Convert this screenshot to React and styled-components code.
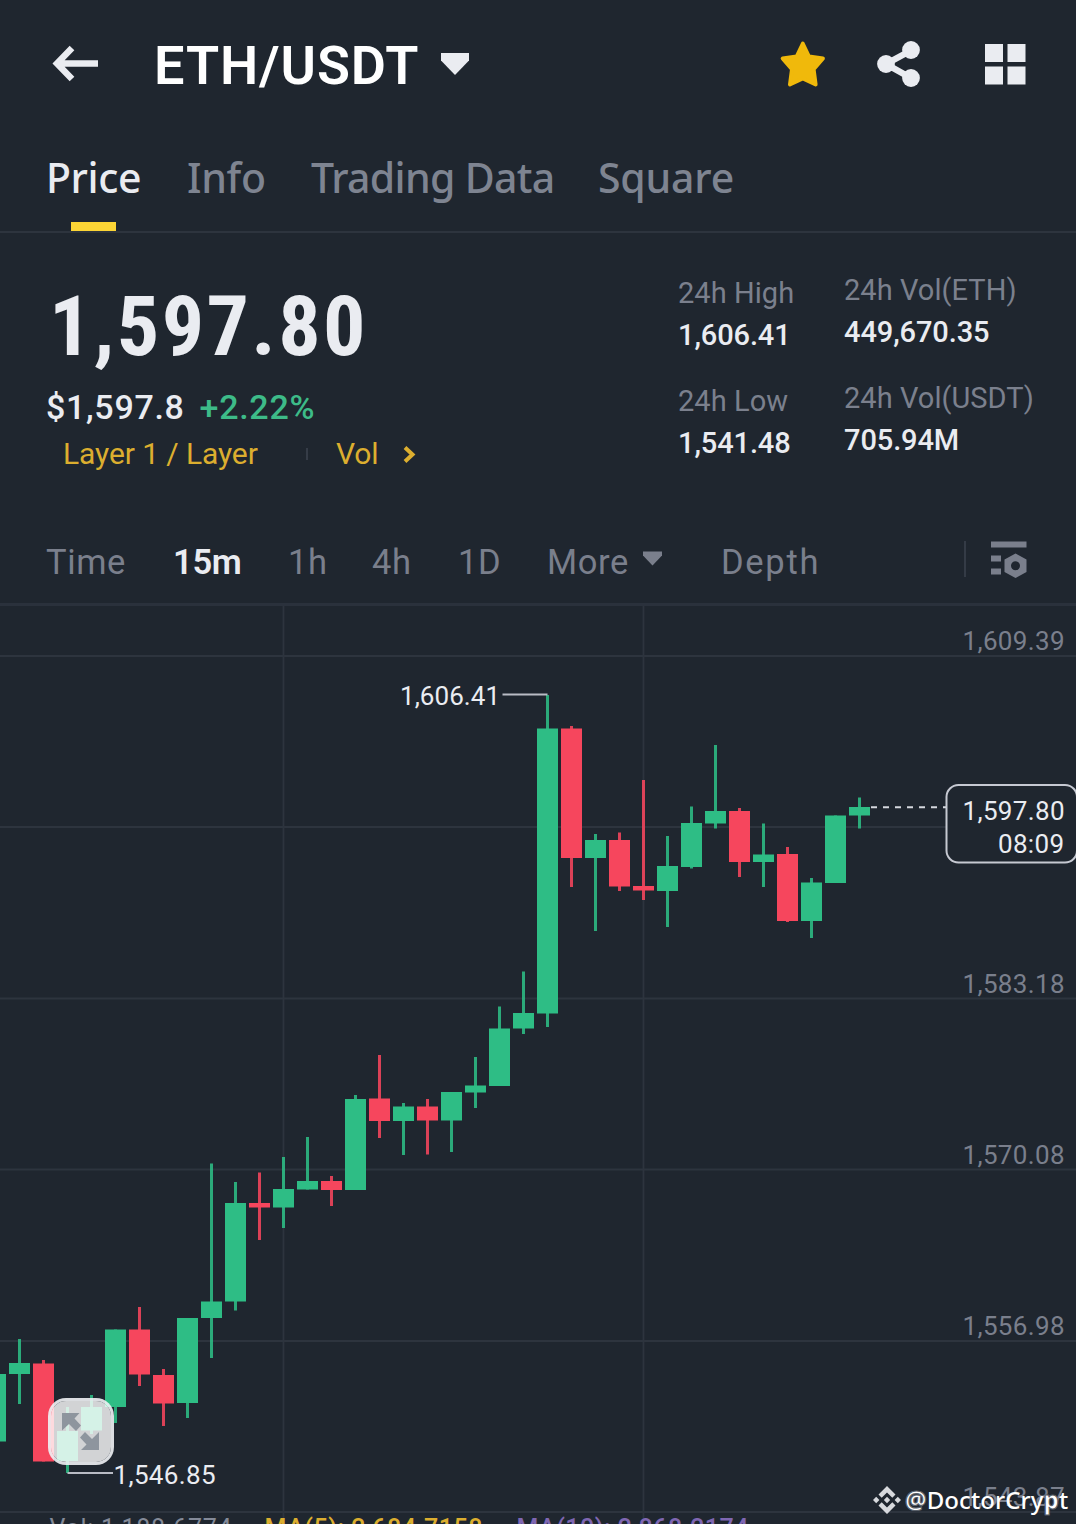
import React from 'react';
import styled, { createGlobalStyle, css } from 'styled-components';

const color = {
  bg: '#1f262f',
  line: '#2d343e',
  text: '#eaecf1',
  muted: '#848a98',
  dim: '#7a7f8c',
  gold: '#dcae2f',
  green: '#2ebd85',
  red: '#f6465d',
};

const GlobalStyle = createGlobalStyle`
  *, *::before, *::after { box-sizing: border-box; }
  body {
    margin: 0;
    background: ${color.bg};
    color: ${color.text};
    font-family: Roboto, "Liberation Sans", sans-serif;
  }
`;

const Screen = styled.main`
  position: relative;
  display: flex;
  flex-direction: column;
  width: 1076px;
  height: 1524px;
  overflow: hidden;
  background: ${color.bg};
`;

/* ---------- header ---------- */
const Header = styled.header`
  display: flex;
  align-items: center;
  height: 128px;
  padding: 0 50px 0 52px;
`;

const Pair = styled.h1`
  width: 264px;
  margin: 4px 25px 0 54px;
  padding-left: 2px;
  font-size: 54px;
  font-weight: 600;
  line-height: 60px;
  letter-spacing: 0.9px;
  color: #fff;
  white-space: nowrap;
`;

const Actions = styled.div`
  display: flex;
  align-items: center;
  margin-left: auto;
`;

const Icon = styled.svg`
  display: block;
  flex: none;
  width: ${(p) => p.width}px;
  height: ${(p) => p.height}px;
  margin-left: ${(p) => p.$gap || 0}px;
  overflow: visible;
`;

/* ---------- section tabs ---------- */
const Tabs = styled.nav`
  display: grid;
  grid-template-columns: 141px 124px 287px auto;
  align-content: start;
  height: 105px;
  padding: 19px 0 0 46px;
  border-bottom: 2px solid ${color.line};
`;

const Tab = styled.a`
  font-family: "Noto Sans", sans-serif;
  font-size: 41px;
  font-weight: 500;
  line-height: 60px;
  white-space: nowrap;
  letter-spacing: ${(p) => p.$tight || 0}px;
  color: ${(p) => (p.$active ? color.text : '#7e8491')};
  ${(p) =>
    p.$active &&
    css`
      &::after {
        content: '';
        display: block;
        width: 45px;
        height: 9px;
        margin: 15px 0 0 25px;
        background: #fcd535;
      }
    `}
`;

/* ---------- price summary ---------- */
const Summary = styled.section`
  display: flex;
  height: 287px;
  padding-left: 46px;
`;

const Quote = styled.div`
  width: 632px;
  padding-top: 50px;
`;

const LastPrice = styled.div`
  padding-left: 3px;
  font-size: 84px;
  font-weight: 700;
  font-stretch: 75%;
  line-height: 88px;
  letter-spacing: 2.4px;
`;

const FiatRow = styled.div`
  display: flex;
  gap: 15px;
  margin-top: 16px;
  font-size: 34px;
  font-weight: 500;
  line-height: 40px;
  letter-spacing: 0.7px;
`;

const Change = styled.span`
  color: #3dbb88;
`;

const TagRow = styled.div`
  display: grid;
  grid-template-columns: 243px 30px 67px auto;
  align-items: center;
  margin-top: 9px;
  padding-left: 17px;
  font-size: 30px;
  line-height: 36px;
  letter-spacing: -0.1px;
  color: ${color.gold};
`;

const TagDivider = styled.i`
  width: 2px;
  height: 12px;
  background: #353c47;
`;

const StatColumn = styled.dl`
  display: flex;
  flex-direction: column;
  gap: 24px;
  width: ${(p) => p.$width}px;
  margin: 0;
  padding-top: ${(p) => p.$top}px;
`;

const Stat = styled.div`
  line-height: 42px;
  font-size: 29px;
  white-space: nowrap;
`;

const StatLabel = styled.dt`
  letter-spacing: 0.05px;
  color: #7b808d;
`;

const StatValue = styled.dd`
  margin: 0;
  font-weight: 500;
  letter-spacing: -0.1px;
`;

/* ---------- interval bar ---------- */
const Intervals = styled.div`
  display: grid;
  grid-template-columns: 127px 115px 84px 86px 89px 174px 243px auto;
  align-items: center;
  height: 86px;
  padding-left: 46px;
  border-bottom: 3px solid #2a313c;
`;

const Interval = styled.span`
  display: flex;
  align-items: center;
  font-size: 34.5px;
  font-weight: ${(p) => (p.$active ? 600 : 400)};
  letter-spacing: ${(p) => p.$spacing ?? 0.6}px;
  color: ${(p) => (p.$active ? color.text : color.dim)};
`;

const Settings = styled.div`
  display: flex;
  align-items: center;
  width: 64px;
  height: 36px;
  margin-bottom: 6px;
  border-left: 2px solid #343b46;
`;

/* ---------- chart ---------- */
const ChartArea = styled.section`
  position: relative;
  flex: 1;
`;

const Plot = styled.svg`
  display: block;
  font-family: Roboto, sans-serif;
  font-size: 26px;
`;

const ExpandButton = styled.button`
  position: absolute;
  left: 48px;
  top: 792px;
  width: 66px;
  height: 67px;
  padding: 0;
  display: grid;
  place-items: center;
  border: 3px solid rgba(240, 242, 245, 0.9);
  border-radius: 18px;
  background: rgba(255, 255, 255, 0.8);
  background-clip: padding-box;
`;

const Watermark = styled.div`
  position: absolute;
  left: 873px;
  top: 877px;
  display: flex;
  align-items: center;
  font: 500 24px/34px "Noto Sans", sans-serif;
  color: #fff;
  white-space: nowrap;
`;

const Handle = styled.span`
  margin-left: 4px;
  letter-spacing: 0.1px;
`;

const Rough = styled.span`
  font-weight: 800;
  -webkit-text-stroke: 1.1px #59606a;
`;

const TOP = 606;
const FIRST_X = -4.5;
const STEP = 24;
const BODY = 21;

// [rising, wick top, body top, body bottom, wick bottom]
const candles = [
  [1, 1374, 1374, 1441.5, 1441.5],
  [1, 1339, 1363, 1374, 1404],
  [0, 1360, 1363.5, 1461.5, 1461.5],
  [1, 1407, 1431, 1461, 1473],
  [1, 1395, 1407, 1430.5, 1434],
  [1, 1329.5, 1329.5, 1407, 1423],
  [0, 1307, 1329.5, 1374.5, 1386],
  [0, 1369, 1375, 1403.5, 1426],
  [1, 1318, 1318, 1403, 1418],
  [1, 1163.5, 1301.5, 1318, 1358],
  [1, 1182, 1203, 1301.5, 1310.5],
  [0, 1172.5, 1203, 1207.5, 1240],
  [1, 1157, 1189, 1207.5, 1228],
  [1, 1137, 1181, 1189.5, 1189.5],
  [0, 1176, 1181, 1190, 1206],
  [1, 1095, 1099, 1190, 1190],
  [0, 1055, 1098.5, 1121, 1138],
  [1, 1103, 1106.5, 1121, 1155],
  [0, 1099, 1106.5, 1120.5, 1154.5],
  [1, 1092, 1092, 1120.5, 1152],
  [1, 1057, 1085.5, 1092.5, 1108],
  [1, 1006.5, 1028.5, 1086, 1086],
  [1, 971.5, 1013, 1028.5, 1034],
  [1, 695, 728.5, 1013.5, 1027],
  [0, 726, 728.5, 858, 887],
  [1, 834, 840, 858, 931],
  [0, 832.5, 840, 886.5, 891],
  [0, 780, 886, 890.5, 900],
  [1, 836, 866, 891, 927],
  [1, 806.5, 823, 867, 868.5],
  [1, 745, 811, 823.5, 828.5],
  [0, 808, 811, 862, 877],
  [1, 823.5, 854.5, 862, 887],
  [0, 847, 854, 921, 922],
  [1, 878, 882.5, 921, 938],
  [1, 815.5, 815.5, 883, 883],
  [1, 797.5, 807, 815.5, 828.5],
];

const rows = [656, 827, 998.5, 1169.5, 1341, 1512];
const scale = [
  ['1,609.39', 650],
  ['1,583.18', 992.5],
  ['1,570.08', 1163.5],
  ['1,556.98', 1335],
  ['1,543.87', 1506],
];

function Candle({ index, data }) {
  const [up, high, top, bottom, low] = data;
  const x = FIRST_X + index * STEP;
  const fill = up ? color.green : color.red;
  return (
    <g fill={fill}>
      <rect x={x - 1.5} y={high} width={3} height={low - high} opacity={0.88} />
      <rect x={x - BODY / 2} y={top} width={BODY} height={bottom - top} />
    </g>
  );
}

function Chart() {
  return (
    <Plot width="1076" height="918" viewBox={`0 ${TOP} 1076 918`}>
      <g stroke={color.line} strokeWidth="1.8">
        {rows.map((y) => (
          <line key={y} x1="0" x2="1076" y1={y} y2={y} />
        ))}
        <line x1="283.5" x2="283.5" y1="606" y2="1524" />
        <line x1="643.5" x2="643.5" y1="606" y2="1524" />
      </g>
      {candles.map((data, i) => (
        <Candle key={i} index={i} data={data} />
      ))}
      <g fill="none" stroke="#b9bcc5" strokeWidth="2">
        <path d="M502.500 694.500H547.500" />
        <path d="M67.500 1473H113" />
        <path d="M871 807.300H946" stroke="#d5d8de" strokeDasharray="6 6" />
        <rect x="946.500" y="785" width="130.500" height="77.500" rx="12" fill={color.bg} stroke="#c6c9d2" />
      </g>
      <g fill={color.dim}>
        {scale.map(([label, y]) => (
          <text key={label} x="962.500" y={y} textLength="102">
            {label}
          </text>
        ))}
      </g>
      <g fill={color.text}>
        <text x="400" y="704.700" textLength="100">1,606.41</text>
        <text x="113.500" y="1484" textLength="102">1,546.85</text>
        <text x="962.500" y="820.300" textLength="102">1,597.80</text>
        <text x="998" y="853" textLength="66">08:09</text>
      </g>
      <g fontSize="25" fontWeight="500">
        <text x="49.500" y="1537.300" fill="#848a98" fontWeight="400" textLength="182">Vol: 1,188.6774</text>
        <text x="264.500" y="1537.300" fill="#dcae2f" textLength="218">MA(5): 2,684.7158</text>
        <text x="516.500" y="1537.300" fill="#7f67b2" textLength="232">MA(10): 2,868.2174</text>
      </g>
    </Plot>
  );
}

export default function App() {
  return (
    <Screen>
      <GlobalStyle />
      <Header>
        <Icon width={46} height={36} viewBox="0 0 46 36">
          <path d="M46 17.500H5M20 2L5 17.500L20 33" fill="none" stroke={color.text} strokeWidth="6.500" />
        </Icon>
        <Pair>ETH/USDT</Pair>
        <Icon width={28} height={22} viewBox="0 0 28 22">
          <path d="M0 0H28V7.500L14 22L0 7.500Z" fill={color.text} />
        </Icon>
        <Actions>
          <Icon width={46} height={46} viewBox="-1 0 46 46">
            <path
              d="M22.800 2.500L29 15.500L43 17.500L33.700 28.200L35.700 43.500L22.800 37.500L9.900 43.500L11.900 28.200L2.600 17.500L16.600 15.500Z"
              fill="#f0b90b"
              stroke="#f0b90b"
              strokeWidth="3.800"
              strokeLinejoin="round"
            />
          </Icon>
          <Icon width={43} height={46} viewBox="0 0 43 46" $gap={52}>
            <path d="M34 9.500L9 23L34 37" fill="none" stroke={color.text} strokeWidth="6.500" />
            <circle cx="34" cy="9" r="8.900" fill={color.text} />
            <circle cx="9" cy="23" r="8.900" fill={color.text} />
            <circle cx="34" cy="37" r="8.900" fill={color.text} />
          </Icon>
          <Icon width={41} height={41} viewBox="0 0 41 41" $gap={65}>
            <path d="M0 0H18V18H0ZM22.500 0H40.500V18H22.500ZM0 22.500H18V40.500H0ZM22.500 22.500H40.500V40.500H22.500Z" fill={color.text} />
          </Icon>
        </Actions>
      </Header>

      <Tabs>
        <Tab $active $tight={-0.4}>Price</Tab>
        <Tab $tight={-0.3}>Info</Tab>
        <Tab $tight={-0.7}>Trading Data</Tab>
        <Tab $tight={-0.2}>Square</Tab>
      </Tabs>

      <Summary>
        <Quote>
          <LastPrice>1,597.80</LastPrice>
          <FiatRow>
            <span>$1,597.8</span>
            <Change>+2.22%</Change>
          </FiatRow>
          <TagRow>
            <span>Layer 1 / Layer</span>
            <TagDivider />
            <span>Vol</span>
            <Icon width={13} height={17} viewBox="0 0 13 17">
              <path d="M2 1.500L9.500 8.500L2 15.500" fill="none" stroke={color.gold} strokeWidth="4" />
            </Icon>
          </TagRow>
        </Quote>
        <StatColumn $width={166} $top={39}>
          <Stat>
            <StatLabel>24h High</StatLabel>
            <StatValue>1,606.41</StatValue>
          </Stat>
          <Stat>
            <StatLabel>24h Low</StatLabel>
            <StatValue>1,541.48</StatValue>
          </Stat>
        </StatColumn>
        <StatColumn $width={200} $top={36}>
          <Stat>
            <StatLabel>24h Vol(ETH)</StatLabel>
            <StatValue>449,670.35</StatValue>
          </Stat>
          <Stat>
            <StatLabel>24h Vol(USDT)</StatLabel>
            <StatValue>705.94M</StatValue>
          </Stat>
        </StatColumn>
      </Summary>

      <Intervals>
        <Interval>Time</Interval>
        <Interval $active $spacing={-0.3}>15m</Interval>
        <Interval>1h</Interval>
        <Interval>4h</Interval>
        <Interval>1D</Interval>
        <Interval>
          More
          <Icon width={19} height={14} viewBox="0 0 19 14" $gap={14}>
            <path d="M0 -3.500H19V0.500L9.500 10.500L0 0.500Z" fill={color.dim} />
          </Icon>
        </Interval>
        <Interval $spacing={1.7}>Depth</Interval>
        <Settings>
          <Icon width={36} height={36} viewBox="0 0 36 36" $gap={25}>
            <path d="M0 0.500H35.500V6.500H0ZM0 14.500H10V20.500H0ZM0 27.500H10V33.500H0Z" fill={color.dim} />
            <path
              fillRule="evenodd"
              d="M24.500 12.500L35.500 18.500V31L24.500 37L13.500 31V18.500ZM24.500 20.300A4.500 4.500 0 1 0 24.500 29.300A4.500 4.500 0 1 0 24.500 20.300Z"
              fill={color.dim}
            />
          </Icon>
        </Settings>
      </Intervals>

      <ChartArea>
        <Chart />
        <ExpandButton aria-label="Expand chart">
          <Icon width={38} height={38} viewBox="0 0 38 38">
            <g fill="#8e959e">
              <path d="M0 0H17.500L12.500 5.500L19 12.500L14 18L7 11L0 17.500Z" />
              <path d="M37 37H19L24.500 31.500L18 24.500L23 19L30 26L37 19Z" />
            </g>
          </Icon>
        </ExpandButton>
        <Watermark>
          <Icon width={28} height={28} viewBox="0 0 28 28">
            <g fill="#d7d9dd">
              <path d="M14 0L22.500 8.500L19.300 11.700L14 6.400L8.700 11.700L5.500 8.500Z" />
              <path d="M14 28L22.500 19.500L19.300 16.300L14 21.600L8.700 16.300L5.500 19.500Z" />
              <path d="M14 10.800L17.200 14L14 17.200L10.800 14Z" />
              <path d="M3.200 10.800L6.400 14L3.200 17.200L0 14Z" />
              <path d="M24.800 10.800L28 14L24.800 17.200L21.600 14Z" />
            </g>
          </Icon>
          <Handle>
            <Rough>@</Rough>DoctorCry<Rough>p</Rough>t
          </Handle>
        </Watermark>
      </ChartArea>
    </Screen>
  );
}
